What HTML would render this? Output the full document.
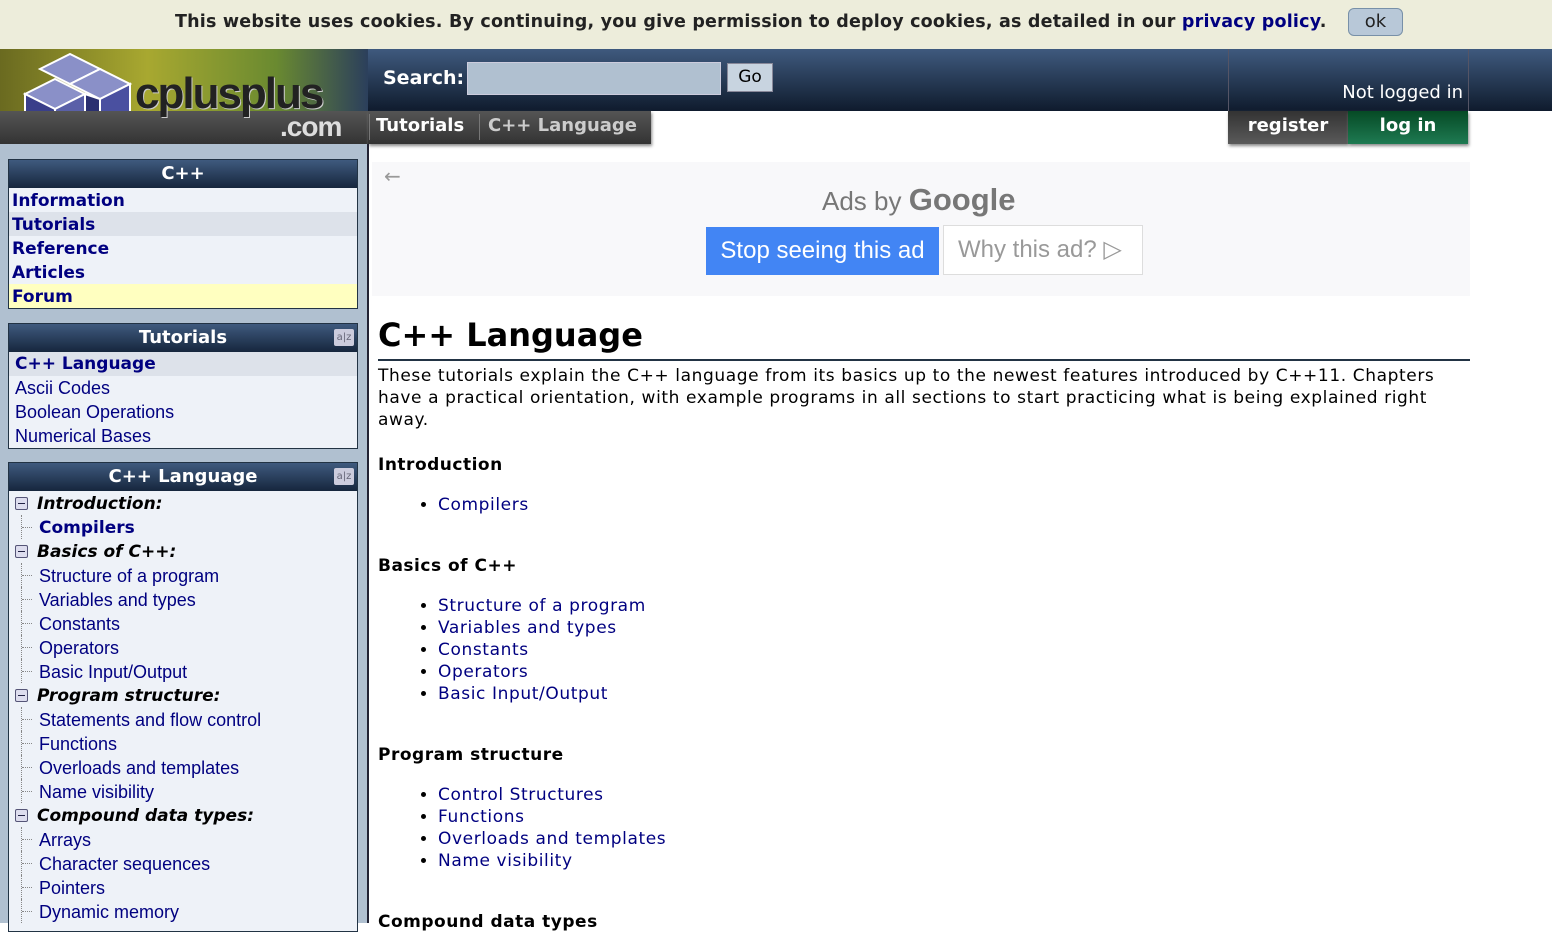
<!DOCTYPE html>
<html><head><meta charset="utf-8"><style>
*{margin:0;padding:0;box-sizing:border-box}
body{width:1552px;height:923px;overflow:hidden;background:#fff;font-family:"DejaVu Sans","Liberation Sans",sans-serif;position:relative}
a{color:#000080;text-decoration:none}
#cookie{position:absolute;left:0;top:0;width:1552px;height:49px;background:#ededdb;font-weight:bold;font-size:18px;color:#222}
#cookie .t{position:absolute;left:175px;top:12px;font-family:"DejaVu Sans",sans-serif;font-size:17.5px;letter-spacing:0.2px}
#cookie .ok{position:absolute;left:1348px;top:8px;width:55px;height:28px;background:#b8c8d8;border:1px solid #7890a8;border-radius:6px;font-weight:normal;text-align:center;line-height:26px;font-size:18px}
#head{position:absolute;left:0;top:49px;width:1552px;height:62px;background:linear-gradient(#3f5a7e,#0f1b2d)}
#logo{position:absolute;left:0;top:49px;width:368px;height:95px;background:linear-gradient(90deg,#6a6a20,#a8a830 40%,#6a8a30 75%,#2b3f5c);}
#logo .bar{position:absolute;left:0;top:62px;width:368px;height:33px;background:linear-gradient(#555,#333)}
#logo .c{position:absolute;left:135px;top:20px;font:bold 44px "Liberation Sans",sans-serif;color:#222;letter-spacing:-2px;text-shadow:1px 1px 0 #ccc}
#logo .com{position:absolute;left:280px;top:62px;font:bold 28px "Liberation Sans",sans-serif;color:#ddd;letter-spacing:-1px}
#search{position:absolute;left:383px;top:67px;color:#fff;font-weight:bold;font-size:19px}
#sbox{position:absolute;left:467px;top:62px;width:254px;height:33px;background:#b0c0d0;border:1px solid #ccd}
#go{position:absolute;left:727px;top:63px;width:46px;height:29px;background:#c8d4e0;border:1px solid #889;font-size:17px;text-align:center;line-height:27px}
#crumb{position:absolute;left:368px;top:111px;width:283px;height:33px;background:linear-gradient(#555,#333);box-shadow:1px 2px 3px #888;font-weight:bold;font-size:18px;line-height:30px}
#crumb span{position:absolute;top:0}
#crumb i{position:absolute;top:3px;height:26px;border-left:1px solid #777}
#user{position:absolute;left:1228px;top:49px;width:241px;height:62px;border-left:1px solid #556;border-right:1px solid #556;color:#fff;font-size:18px}
#reg{position:absolute;left:1228px;top:111px;width:120px;height:33px;background:linear-gradient(#333,#5a5a5a);color:#fff;font-weight:bold;font-size:18px;text-align:center;line-height:30px;box-shadow:1px 2px 3px #888}
#log{position:absolute;left:1348px;top:111px;width:120px;height:33px;background:linear-gradient(#064a25,#1e7a52);color:#fff;font-weight:bold;font-size:18px;text-align:center;line-height:30px;box-shadow:1px 2px 3px #888}
#side{position:absolute;left:0;top:144px;width:369px;height:779px;background:#b0c0d0;border-right:2px solid #223}
.box{position:absolute;left:8px;width:350px;background:#eef2f8;border:1px solid #234}
.box h3{height:28px;background:linear-gradient(#3f5a7e,#16263d);color:#fff;text-align:center;font-size:18px;line-height:28px}
.box .it{height:24px;line-height:26px;font-size:17px;padding-left:3px;font-weight:bold}
.box .ln{height:24px;line-height:24px;font-size:18px;padding-left:6px;font-family:"Liberation Sans",sans-serif}
.az{position:absolute;right:3px;top:5px;width:20px;height:17px;background:#ccd;border-radius:2px;font-size:10px;color:#667;line-height:17px;text-align:center}
.tr{height:24px;line-height:26px;font-size:18px;position:relative;padding-left:30px;font-family:"Liberation Sans",sans-serif}
.tr.s{font-style:italic;font-weight:bold;padding-left:28px;font-size:17px;font-family:"DejaVu Sans",sans-serif}
.tr.s:before{content:"";position:absolute;left:6px;top:6px;width:11px;height:11px;border:1px solid #557;background:#dde;border-radius:2px}
.tr.s:after{content:"";position:absolute;left:9px;top:12px;width:7px;height:1px;background:#224}
.tr.c:before{content:"";position:absolute;left:12px;top:0;height:24px;border-left:1px dotted #888}
.tr.c:after{content:"";position:absolute;left:13px;top:12px;width:10px;border-top:1px dotted #888}
#ad{position:absolute;left:372px;top:162px;width:1098px;height:134px;background:#f8f8fa}
#main{position:absolute;left:378px;top:312px;width:1092px;font-size:17px;color:#000}
#main h1{font-size:32px;border-bottom:2px solid #234;height:49px;line-height:46px}
#main p{margin-top:4px;line-height:22px;letter-spacing:0.6px}
#main h4{font-size:17px;margin-top:24px;letter-spacing:0.5px}
#main ul{margin:19px 0 0 60px;line-height:22px;letter-spacing:0.6px}
#main li a{color:#000080}
</style></head><body>
<div id="cookie"><span class="t">This website uses cookies. By continuing, you give permission to deploy cookies, as detailed in our <a>privacy policy</a>.</span><div class="ok">ok</div></div>
<div id="head"></div>
<div id="logo"><svg width="140" height="95" style="position:absolute;left:10px;top:0"><g fill="#8a90c8" stroke="#fff" stroke-width="2"><polygon points="30,20 60,5 90,20 60,35"/><polygon points="60,35 90,20 120,35 90,50"/><polygon points="15,45 45,30 75,45 45,60"/><polygon points="15,45 45,60 45,92 15,80" fill="#3a3f8a"/><polygon points="45,60 75,45 75,80 45,92" fill="#5a60a8"/><polygon points="90,50 120,35 120,75 90,88" fill="#4a50a0"/><polygon points="75,45 90,50 90,88 75,80" fill="#2a2f70"/></g></svg><div class="bar"></div><div class="c">cplusplus</div><div class="com">.com</div></div>
<div id="search">Search:</div><div id="sbox"></div><div id="go">Go</div>
<div id="crumb"><i style="left:1px"></i><span style="left:8px;color:#fff">Tutorials</span><i style="left:111px"></i><span style="left:120px;color:#ccc">C++ Language</span></div>
<div id="user"><span style="position:absolute;right:5px;top:33px">Not logged in</span></div>
<div id="reg">register</div><div id="log">log in</div>
<div id="side">
<div class="box" style="top:15px"><h3>C++</h3><div class="it"><a>Information</a></div><div class="it" style="background:#dde2ea"><a>Tutorials</a></div><div class="it"><a>Reference</a></div><div class="it"><a>Articles</a></div><div class="it" style="background:#ffffc0"><a>Forum</a></div></div>
<div class="box" style="top:179px"><h3>Tutorials</h3><div class="az">a|z</div><div class="ln" style="font-weight:bold;background:#dde2ea;font-family:'DejaVu Sans';font-size:17px"><a>C++ Language</a></div><div class="ln"><a>Ascii Codes</a></div><div class="ln"><a>Boolean Operations</a></div><div class="ln"><a>Numerical Bases</a></div></div>
<div class="box" style="top:318px;height:470px"><h3>C++ Language</h3><div class="az">a|z</div>
<div class="tr s">Introduction:</div><div class="tr c" style="font-weight:bold;font-family:'DejaVu Sans';font-size:17px"><a>Compilers</a></div>
<div class="tr s">Basics of C++:</div><div class="tr c"><a>Structure of a program</a></div><div class="tr c"><a>Variables and types</a></div><div class="tr c"><a>Constants</a></div><div class="tr c"><a>Operators</a></div><div class="tr c"><a>Basic Input/Output</a></div>
<div class="tr s">Program structure:</div><div class="tr c"><a>Statements and flow control</a></div><div class="tr c"><a>Functions</a></div><div class="tr c"><a>Overloads and templates</a></div><div class="tr c"><a>Name visibility</a></div>
<div class="tr s">Compound data types:</div><div class="tr c"><a>Arrays</a></div><div class="tr c"><a>Character sequences</a></div><div class="tr c"><a>Pointers</a></div><div class="tr c"><a>Dynamic memory</a></div>
</div></div>
<div id="ad"><div style="position:absolute;left:12px;top:2px;color:#999;font-size:20px">←</div>
<div style="position:absolute;left:450px;top:20px;font:26px 'Liberation Sans',sans-serif;color:#777">Ads by <b style="font-size:31px">Google</b></div>
<div style="position:absolute;left:334px;top:65px;width:233px;height:48px;background:#4285f4;color:#fff;font:24px 'Liberation Sans',sans-serif;line-height:48px;text-align:center">Stop seeing this ad</div>
<div style="position:absolute;left:571px;top:63px;width:200px;height:50px;background:#fff;border:1px solid #ddd;color:#999;font:24px 'Liberation Sans',sans-serif;line-height:48px;padding-left:14px">Why this ad? ▷</div></div>
<div id="main"><h1>C++ Language</h1>
<p>These tutorials explain the C++ language from its basics up to the newest features introduced by C++11. Chapters have a practical orientation, with example programs in all sections to start practicing what is being explained right away.</p>
<h4>Introduction</h4><ul><li><a>Compilers</a></li></ul>
<h4 style="margin-top:40px">Basics of C++</h4><ul><li><a>Structure of a program</a></li><li><a>Variables and types</a></li><li><a>Constants</a></li><li><a>Operators</a></li><li><a>Basic Input/Output</a></li></ul>
<h4 style="margin-top:40px">Program structure</h4><ul><li><a>Control Structures</a></li><li><a>Functions</a></li><li><a>Overloads and templates</a></li><li><a>Name visibility</a></li></ul>
<h4 style="margin-top:40px">Compound data types</h4></div>
</body></html>
